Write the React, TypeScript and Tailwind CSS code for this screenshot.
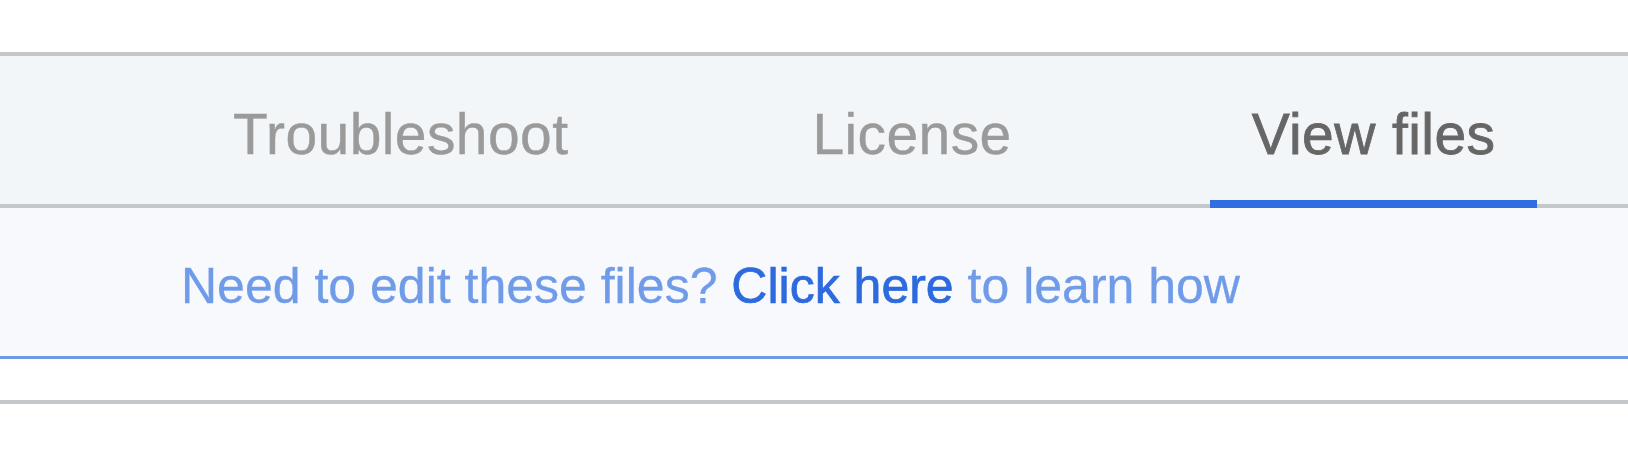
import React from 'react';

const tabs = [
  { label: 'Troubleshoot', active: false, gap: '' },
  { label: 'License', active: false, gap: 'ml-[160px]' },
  { label: 'View files', active: true, gap: 'ml-[156px]' },
];

const App = () => {
  return (
    <div className="w-full h-[460px] bg-white font-['Liberation_Sans',Arial,sans-serif] pt-[52px]">
      <div className="border-t-4 border-b-4 border-[#c5c8cb] bg-[#f3f6f8] flex pl-[191px]">
        {tabs.map((tab) => (
          <div key={tab.label} className={`relative px-[42px] pt-[50px] pb-[42px] ${tab.gap}`}>
            <span
              className={
                tab.active
                  ? 'block text-[57px] leading-[56px] tracking-[0.4px] text-[#666666] [-webkit-text-stroke:0.8px_#666666]'
                  : 'block text-[57px] leading-[56px] tracking-[0.4px] text-[#9a9a9a] [-webkit-text-stroke:0.4px_#9a9a9a]'
              }
            >
              {tab.label}
            </span>
            {tab.active && (
              <div className="absolute left-0 right-0 -bottom-[4px] h-[8px] bg-[#2f6de0]" />
            )}
          </div>
        ))}
      </div>
      <div className="bg-[#f7f9fc] border-b-[3px] border-[#6f9be6] pl-[181px] pt-[53px] pb-[45px]">
        <p className="text-[50px] leading-[50px] text-[#6f9be9] whitespace-nowrap [-webkit-text-stroke:0.3px_#6f9be9]">
          Need to edit these files?{' '}
          <a href="#" className="text-[#2c6ade] [-webkit-text-stroke:0.7px_#2c6ade]">
            Click here
          </a>{' '}
          to learn how
        </p>
      </div>
      <div className="h-[41px]" />
      <div className="border-t-4 border-[#c5c8cb]" />
    </div>
  );
};

export default App;
